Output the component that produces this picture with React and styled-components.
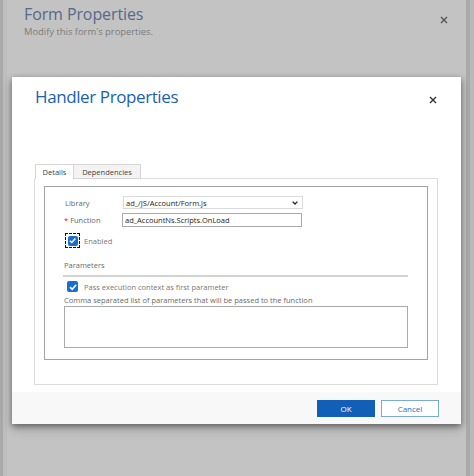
import React from "react";
import styled, { createGlobalStyle } from "styled-components";

const GlobalStyle = createGlobalStyle`
    html, body {
        margin: 0;
        padding: 0;
        width: 474px;
        height: 476px;
        overflow: hidden;
        font-family: "Open Sans", "Noto Sans", sans-serif;
    }
    * {
        box-sizing: border-box;
    }
`;

const Screen = styled.div`
    position: relative;
    display: flex;
    width: 474px;
    height: 476px;
    background: #a9a9a9;
    padding-left: 3px;
`;

const BackPanel = styled.div`
    width: 463px;
    height: 100%;
    background: #c3c3c3;
    border-left: 4px solid #bdbdbd;
    padding: 2px 0 0 17px;
`;

const RightStrip = styled.div`
    width: 4px;
    height: 100%;
    margin-left: 4px;
    background: #b9b9b9;
`;

const BackHeader = styled.div`
    display: flex;
    justify-content: space-between;
    align-items: flex-start;
    padding-right: 16px;
`;

const BackTitle = styled.div`
    font-size: 16px;
    line-height: 24px;
    letter-spacing: -0.1px;
    color: #56698a;
`;

const BackSubtitle = styled.div`
    font-size: 9.4px;
    line-height: 12px;
    color: #7b7b7b;
`;

const CloseButton = styled.div`
    display: flex;
    width: 12px;
    height: 12px;
    align-items: center;
    justify-content: center;
    margin-top: ${(p) => p.$top || 0}px;
`;

const Dialog = styled.div`
    position: absolute;
    left: 12px;
    top: 77px;
    width: 449px;
    height: 347px;
    background: #ffffff;
    box-shadow: 0 2px 6px rgba(0, 0, 0, 0.45), 0 6px 10px rgba(0, 0, 0, 0.15);
    display: flex;
    flex-direction: column;
`;

const DialogHeader = styled.div`
    display: flex;
    justify-content: space-between;
    align-items: flex-start;
    height: 87px;
    padding: 8px 22px 0 23px;
`;

const DialogTitle = styled.div`
    font-size: 17px;
    line-height: 24px;
    letter-spacing: -0.4px;
    color: #1a5fb4;
`;

const DialogBody = styled.div`
    flex: 1;
    padding-left: 22px;
`;

const TabRow = styled.div`
    display: flex;
    padding-left: 1px;
    height: 14px;
`;

const Tab = styled.div`
    width: ${(p) => p.$w}px;
    height: 15px;
    display: flex;
    align-items: center;
    justify-content: center;
    font-size: 7.5px;
    color: #444;
    border: 1px solid #d6d6d6;
    border-bottom: ${(p) => (p.$active ? "none" : "1px solid #d6d6d6")};
    border-left: ${(p) => (p.$first ? "1px solid #d6d6d6" : "none")};
    background: ${(p) => (p.$active ? "#ffffff" : "#f3f3f3")};
    position: relative;
    z-index: 1;
`;

const TabPanel = styled.div`
    width: 404px;
    height: 207px;
    border: 1px solid #dcdcdc;
    padding: 7px 9px;
`;

const FieldBox = styled.div`
    height: 174px;
    border: 1px solid #a2a2a2;
    padding: 9px 19px 0 19px;
    display: flex;
    flex-direction: column;
`;

const FieldRow = styled.div`
    display: flex;
    align-items: center;
    margin-top: ${(p) => p.$mt || 0}px;
    padding-left: ${(p) => p.$pl || 0}px;
`;

const Label = styled.div`
    width: 58px;
    font-size: 7.5px;
    color: #666;
`;

const Required = styled.span`
    color: #d0102b;
    margin-right: 2px;
`;

const Select = styled.div`
    width: 180px;
    height: 13px;
    border: 1px solid #dadada;
    display: flex;
    align-items: center;
    justify-content: space-between;
    padding: 0 4px 0 2px;
    font-size: 7.5px;
    color: #222;
`;

const TextInput = styled.div`
    width: 180px;
    height: 14px;
    border: 1px solid #a9a9a9;
    display: flex;
    align-items: center;
    padding: 0 2px;
    font-size: 7.5px;
    color: #222;
`;

const FocusRing = styled.div`
    width: 15px;
    height: 15px;
    border: 1.5px dashed #111;
    display: flex;
    align-items: center;
    justify-content: center;
    margin-left: 1px;
`;

const CheckBox = styled.div`
    width: ${(p) => p.$size}px;
    height: ${(p) => p.$size}px;
    border-radius: 2px;
    background: #1a6dd0;
    display: flex;
    align-items: center;
    justify-content: center;
`;

const CheckText = styled.div`
    font-size: 7.5px;
    color: #777;
    margin-left: ${(p) => p.$ml}px;
`;

const SectionLabel = styled.div`
    font-size: 7.5px;
    color: #6a6a6a;
    margin-top: ${(p) => p.$mt || 0}px;
    line-height: 12px;
`;

const Divider = styled.div`
    height: 2px;
    background: #d3d3d3;
    margin: 4px 0 0 -1px;
    width: 345px;
`;

const TextArea = styled.div`
    width: 344px;
    height: 42px;
    border: 1px solid #ababab;
`;

const Footer = styled.div`
    height: 32px;
    background: #f8f8f8;
    display: flex;
    justify-content: flex-end;
    align-items: center;
    gap: 6px;
    padding-right: 22px;
`;

const Button = styled.div`
    width: 58px;
    height: 17px;
    display: flex;
    align-items: center;
    justify-content: center;
    font-size: 8px;
    color: ${(p) => (p.$primary ? "#ffffff" : "#2a6fc4")};
    background: ${(p) => (p.$primary ? "#125fb8" : "#ffffff")};
    border: 1px solid ${(p) => (p.$primary ? "#125fb8" : "#7aa9dc")};
`;

const CloseIcon = ({ color }) => (
    <svg width="8" height="8" viewBox="0 0 8 8">
        <path d="M1 1L7 7M7 1L1 7" stroke={color} strokeWidth="1.4" />
    </svg>
);

const CheckMark = ({ size }) => (
    <svg width={size} height={size} viewBox="0 0 10 10">
        <path d="M2 5.2L4.2 7.3L8.2 2.8" stroke="#fff" strokeWidth="1.6" fill="none" />
    </svg>
);

const Chevron = () => (
    <svg width="6" height="4" viewBox="0 0 6 4">
        <path d="M0.6 0.6L3 3L5.4 0.6" stroke="#222" strokeWidth="1.3" fill="none" />
    </svg>
);

const App = () => {
    return (
        <>
            <GlobalStyle />
            <Screen>
                <BackPanel>
                    <BackHeader>
                        <div>
                            <BackTitle>Form Properties</BackTitle>
                            <BackSubtitle>Modify this form's properties.</BackSubtitle>
                        </div>
                        <CloseButton $top={12}>
                            <CloseIcon color="#555" />
                        </CloseButton>
                    </BackHeader>
                </BackPanel>
                <RightStrip />

                <Dialog>
                    <DialogHeader>
                        <DialogTitle>Handler Properties</DialogTitle>
                        <CloseButton $top={9}>
                            <CloseIcon color="#333" />
                        </CloseButton>
                    </DialogHeader>
                    <DialogBody>
                        <TabRow>
                            <Tab $w={39} $active $first>Details</Tab>
                            <Tab $w={67}>Dependencies</Tab>
                        </TabRow>
                        <TabPanel>
                            <FieldBox>
                                <FieldRow $pl={1}>
                                    <Label>Library</Label>
                                    <Select>
                                        ad_/JS/Account/Form.js
                                        <Chevron />
                                    </Select>
                                </FieldRow>
                                <FieldRow $mt={4}>
                                    <Label>
                                        <Required>*</Required>Function
                                    </Label>
                                    <TextInput>ad_AccountNs.Scripts.OnLoad</TextInput>
                                </FieldRow>
                                <FieldRow $mt={6}>
                                    <FocusRing>
                                        <CheckBox $size={10}>
                                            <CheckMark size={9} />
                                        </CheckBox>
                                    </FocusRing>
                                    <CheckText $ml={4}>Enabled</CheckText>
                                </FieldRow>
                                <SectionLabel $mt={11}>Parameters</SectionLabel>
                                <Divider />
                                <FieldRow $mt={4} $pl={3}>
                                    <CheckBox $size={11}>
                                        <CheckMark size={10} />
                                    </CheckBox>
                                    <CheckText $ml={6}>Pass execution context as first parameter</CheckText>
                                </FieldRow>
                                <SectionLabel $mt={2}>
                                    Comma separated list of parameters that will be passed to the function
                                </SectionLabel>
                                <TextArea />
                            </FieldBox>
                        </TabPanel>
                    </DialogBody>
                    <Footer>
                        <Button $primary>OK</Button>
                        <Button>Cancel</Button>
                    </Footer>
                </Dialog>
            </Screen>
        </>
    );
};

export default App;
